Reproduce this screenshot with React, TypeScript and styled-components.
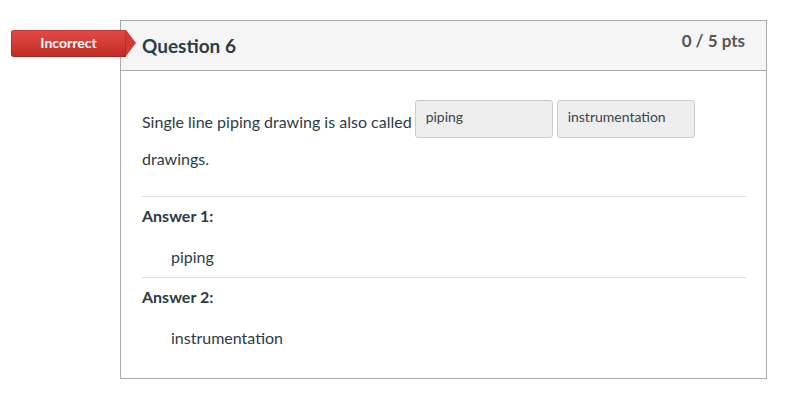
import React from "react";
import styled, { createGlobalStyle } from "styled-components";

const GlobalStyle = createGlobalStyle`
  body {
    margin: 0;
    background: #fff;
    font-family: Lato, "Open Sans", sans-serif;
    color: #2d3b45;
  }
`;

const Page = styled.div`
  padding: 20px 0 26px 120px;
`;

const Card = styled.div`
  position: relative;
  width: 645px;
  border: 1px solid #aaaaaa;
  background: #fff;
`;

const Badge = styled.div`
  position: absolute;
  left: -110px;
  top: 9px;
  width: 115px;
  height: 27px;
  box-sizing: border-box;
  border-radius: 3px 0 0 3px;
  background: linear-gradient(#e34a45, #bf2b26);
  box-shadow: inset 0 0 0 1px rgba(140, 20, 20, 0.35);
  color: #fff;
  font-size: 14px;
  font-weight: 700;
  line-height: 26px;
  text-align: center;

  &::after {
    content: "";
    position: absolute;
    left: 115px;
    top: 0;
    border-style: solid;
    border-width: 13.5px 0 13.5px 10px;
    border-color: transparent transparent transparent #d13a35;
  }
`;

const Header = styled.div`
  display: flex;
  justify-content: space-between;
  align-items: flex-start;
  height: 49px;
  padding: 0 21px;
  background: #f5f5f5;
  border-bottom: 1px solid #aaaaaa;
`;

const Title = styled.h2`
  margin: 0;
  padding-top: 13px;
  font-size: 19px;
  line-height: 24px;
  font-weight: 700;
  color: #2d3b45;
`;

const Points = styled.div`
  padding-top: 10px;
  font-size: 17px;
  line-height: 20px;
  font-weight: 700;
  color: #555;
`;

const Body = styled.div`
  padding: 29px 20px 20px 21px;
`;

const QuestionText = styled.div`
  font-size: 16px;
  line-height: 24px;
  padding-bottom: 25px;
`;

const Select = styled.span`
  display: inline-block;
  box-sizing: border-box;
  width: 138px;
  height: 38px;
  margin: 0 4px 9px 0;
  padding: 6px 10px 0;
  vertical-align: 6px;
  background: #eeeeee;
  border: 1px solid #cccccc;
  border-radius: 3px;
  font-size: 14px;
  line-height: 20px;
  color: #3a444c;

  &:first-of-type {
    margin-left: 3px;
  }
`;

const AnswerBlock = styled.div`
  border-top: 1px solid #dddddd;
  padding: 7px 0 8px;
`;

const AnswerLabel = styled.div`
  font-size: 16px;
  line-height: 24px;
  font-weight: 700;
`;

const AnswerValue = styled.div`
  margin-top: 17px;
  padding-left: 29px;
  font-size: 16px;
  line-height: 24px;
`;

const answers = ["piping", "instrumentation"];

export default function App() {
  return (
    <>
      <GlobalStyle />
      <Page>
        <Card>
          <Badge>Incorrect</Badge>
          <Header>
            <Title>Question 6</Title>
            <Points>0 / 5 pts</Points>
          </Header>
          <Body>
            <QuestionText>
              Single line piping drawing is also called
              <Select>piping</Select>
              <Select>instrumentation</Select> drawings.
            </QuestionText>
            {answers.map((a, i) => (
              <AnswerBlock key={i}>
                <AnswerLabel>Answer {i + 1}:</AnswerLabel>
                <AnswerValue>{a}</AnswerValue>
              </AnswerBlock>
            ))}
          </Body>
        </Card>
      </Page>
    </>
  );
}
